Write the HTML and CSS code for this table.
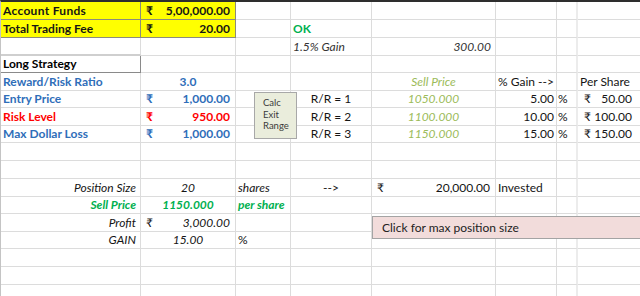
FILE: index.html
```html
<!DOCTYPE html>
<html>
<head>
<meta charset="utf-8">
<link rel="stylesheet" href="styles.css">
</head>
<body>
<div class="wrap">
  <div class="sheet">
    <!-- row 1 -->
    <div class="c yel b big">Account Funds</div>
    <div class="c yel b cur"><span>₹</span><span>5,00,000.00</span></div>
    <div class="c"></div><div class="c"></div><div class="c"></div><div class="c"></div><div class="c g"></div><div class="c h"></div>
    <!-- row 2 -->
    <div class="c yel b yb">Total Trading Fee</div>
    <div class="c yel b cur yb"><span>₹</span><span>20.00</span></div>
    <div class="c"></div><div class="c ok b">OK</div><div class="c"></div><div class="c"></div><div class="c g"></div><div class="c h"></div>
    <!-- row 3 -->
    <div class="c top-ls"></div><div class="c"></div><div class="c"></div>
    <div class="c it grey">1.5% Gain</div>
    <div class="c it grey r r4">300.00</div>
    <div class="c"></div><div class="c g"></div><div class="c h"></div>
    <!-- row 4 -->
    <div class="c b ls">Long Strategy</div>
    <div class="c"></div><div class="c"></div><div class="c"></div><div class="c"></div><div class="c"></div><div class="c g"></div><div class="c h"></div>
    <!-- row 5 -->
    <div class="c b blue">Reward/Risk Ratio</div>
    <div class="c b blue ctr">3.0</div>
    <div class="c"></div><div class="c"></div>
    <div class="c it lg ctr">Sell Price</div>
    <div class="c">% Gain --&gt;</div>
    <div class="c g"></div>
    <div class="c h">Per Share</div>
    <!-- row 6 -->
    <div class="c b blue">Entry Price</div>
    <div class="c b blue cur"><span>₹</span><span>1,000.00</span></div>
    <div class="c"></div>
    <div class="c ctr">R/R = 1</div>
    <div class="c it lg ctr">1050.000</div>
    <div class="c r">5.00</div>
    <div class="c g">%</div>
    <div class="c h cur hc"><span>₹</span><span>50.00</span></div>
    <!-- row 7 -->
    <div class="c b red">Risk Level</div>
    <div class="c b red cur"><span>₹</span><span>950.00</span></div>
    <div class="c"></div>
    <div class="c ctr">R/R = 2</div>
    <div class="c it lg ctr">1100.000</div>
    <div class="c r">10.00</div>
    <div class="c g">%</div>
    <div class="c h cur hc"><span>₹</span><span>100.00</span></div>
    <!-- row 8 -->
    <div class="c b blue">Max Dollar Loss</div>
    <div class="c b blue cur"><span>₹</span><span>1,000.00</span></div>
    <div class="c"></div>
    <div class="c ctr">R/R = 3</div>
    <div class="c it lg ctr">1150.000</div>
    <div class="c r">15.00</div>
    <div class="c g">%</div>
    <div class="c h cur hc"><span>₹</span><span>150.00</span></div>
    <!-- row 9 -->
    <div class="c"></div><div class="c"></div><div class="c"></div><div class="c"></div><div class="c"></div><div class="c"></div><div class="c g"></div><div class="c h"></div>
    <!-- row 10 -->
    <div class="c"></div><div class="c"></div><div class="c"></div><div class="c"></div><div class="c"></div><div class="c"></div><div class="c g"></div><div class="c h"></div>
    <!-- row 11 -->
    <div class="c it r r4">Position Size</div>
    <div class="c it ctr">20</div>
    <div class="c it">shares</div>
    <div class="c ctr">--&gt;</div>
    <div class="c cur"><span>₹</span><span>20,000.00</span></div>
    <div class="c">Invested</div>
    <div class="c g"></div><div class="c h"></div>
    <!-- row 12 -->
    <div class="c it b gr r r4">Sell Price</div>
    <div class="c it b gr ctr">1150.000</div>
    <div class="c it b gr">per share</div>
    <div class="c"></div><div class="c"></div><div class="c"></div><div class="c g"></div><div class="c h"></div>
    <!-- row 13 -->
    <div class="c it r r4">Profit</div>
    <div class="c it cur"><span>₹</span><span>3,000.00</span></div>
    <div class="c"></div><div class="c"></div><div class="c"></div><div class="c"></div><div class="c g"></div><div class="c h"></div>
    <!-- row 14 -->
    <div class="c it r r4">GAIN</div>
    <div class="c it ctr">15.00</div>
    <div class="c">%</div>
    <div class="c"></div><div class="c"></div><div class="c"></div><div class="c g"></div><div class="c h"></div>
    <!-- row 15 -->
    <div class="c"></div><div class="c"></div><div class="c"></div><div class="c"></div><div class="c"></div><div class="c"></div><div class="c g"></div><div class="c h"></div>
    <!-- row 16 -->
    <div class="c"></div><div class="c"></div><div class="c"></div><div class="c"></div><div class="c"></div><div class="c"></div><div class="c g"></div><div class="c h"></div>
    <!-- row 17 -->
    <div class="c"></div><div class="c"></div><div class="c"></div><div class="c"></div><div class="c"></div><div class="c"></div><div class="c g"></div><div class="c h"></div>
  </div>
  <div class="btn-calc">Calc<br>Exit<br>Range</div>
  <div class="btn-max">Click for max position size</div>
</div>
</body>
</html>
```
FILE: styles.css
```css
html, body {
  margin: 0;
  padding: 0;
  background: #ffffff;
  overflow: hidden;
}
body {
  width: 640px;
  height: 296px;
  font-family: Lato, "DejaVu Sans", sans-serif;
  font-size: 12px;
  color: #151515;
}
.wrap {
  position: relative;
  width: 640px;
  height: 296px;
  overflow: hidden;
}
.sheet {
  display: grid;
  grid-template-columns: 140px 95px 55px 81px 124px 61px 21px 1fr;
  grid-template-rows: 18px 18px 18px 17px 18px 17px 18px 17px 18px 18px 18px 17px 18px 17px 18px 18px 17px;
  border-top: 2px solid #2e2e2e;
  border-left: 1px solid #c4c4c4;
}
.c {
  box-sizing: border-box;
  border-right: 1px solid #dcdcdc;
  border-bottom: 1px solid #dcdcdc;
  display: flex;
  align-items: flex-end;
  padding: 0 2px 1px 2px;
  line-height: 14px;
  white-space: nowrap;
  min-width: 0;
}
.c.g { border-right: 2px solid #ececec; padding-left: 1px; }
.c.h { border-right: none; }
.yel { background: #ffff00; border-color: #8c8c7a; }
.yb { border-bottom-color: #8c8c7a; }
.b { font-weight: 700; }
.big { letter-spacing: 0.3px; }
.it { font-style: italic; }
.cur { justify-content: space-between; padding-left: 5px; padding-right: 5px; }
.hc { padding-left: 6px; padding-right: 8px; }
.r { justify-content: flex-end; }
.r4 { padding-right: 4px; }
.ctr { justify-content: center; }
.blue { color: #2f6eb9; }
.red { color: #ff0000; }
.lg { color: #9bbb59; }
.gr { color: #00b050; }
.ok { color: #00b050; }
.grey { color: #333333; }
.top-ls { border-bottom: 2px solid #cfcfcf; }
.ls { border-right-color: #8a8a8a; border-bottom-color: #8a8a8a; color: #000; }
.btn-calc {
  position: absolute;
  left: 254px;
  top: 92px;
  width: 43px;
  height: 47px;
  box-sizing: border-box;
  background: #eaeddc;
  border: 1px solid #a8a8a8;
  font-size: 9.5px;
  line-height: 11.5px;
  color: #3a3a3a;
  padding: 4px 0 0 8px;
}
.btn-max {
  position: absolute;
  left: 372px;
  top: 216px;
  width: 280px;
  height: 23px;
  box-sizing: border-box;
  background: #f2dcdb;
  border: 1px solid #a4a4a4;
  padding: 3px 0 0 9px;
  line-height: 15px;
  color: #222;
}
```
